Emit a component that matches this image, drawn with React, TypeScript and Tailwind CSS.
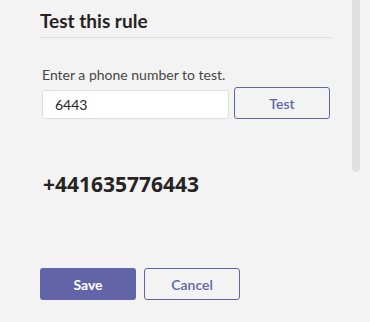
const font = { fontFamily: 'Lato, "Open Sans", sans-serif' };
const numberFont = { fontFamily: '"Open Sans", Lato, sans-serif' };

export default function App() {
  return (
    <div
      className="w-[370px] h-[322px] bg-[#f3f3f3] flex overflow-hidden text-[#252423]"
      style={font}
    >
      <div className="w-[332px] pl-[40px] flex flex-col">
        {/* Heading */}
        <div className="pt-[9px] pb-[4px] border-b border-[#e1dfdd]">
          <h2 className="text-[19px] leading-[24px] font-bold">Test this rule</h2>
        </div>

        {/* Test input */}
        <div className="pl-[2px] mt-[27px]">
          <label className="block text-[14px] leading-[20px] text-[#484644]">
            Enter a phone number to test.
          </label>
          <div className="mt-[2px] flex items-end gap-[5px]">
            <input
              defaultValue="6443"
              className="w-[187px] h-[29px] bg-white border border-[#e1dfdd] rounded-[3px] px-[12px] text-[14px] text-[#252423] outline-none"
            />
            <button className="w-[96px] h-[32px] border border-[#6264a7] rounded-[3px] text-[14px] font-semibold text-[#6264a7]">
              Test
            </button>
          </div>
        </div>

        {/* Result */}
        <p
          className="mt-[51px] pl-[3px] text-[21px] leading-[28px] font-bold"
          style={numberFont}
        >
          +441635776443
        </p>

        {/* Actions */}
        <div className="mt-[70px] flex gap-[8px]">
          <button className="w-[96px] h-[32px] rounded-[3px] bg-[#6264a7] text-white text-[14px] font-bold">
            Save
          </button>
          <button className="w-[96px] h-[32px] rounded-[3px] border border-[#6264a7] text-[#6264a7] text-[14px] font-semibold">
            Cancel
          </button>
        </div>
      </div>

      {/* Scrollbar */}
      <div className="ml-[20px] w-[8px] h-[172px] rounded-b-[4px] bg-[#e0e0e0]" />
    </div>
  );
}
